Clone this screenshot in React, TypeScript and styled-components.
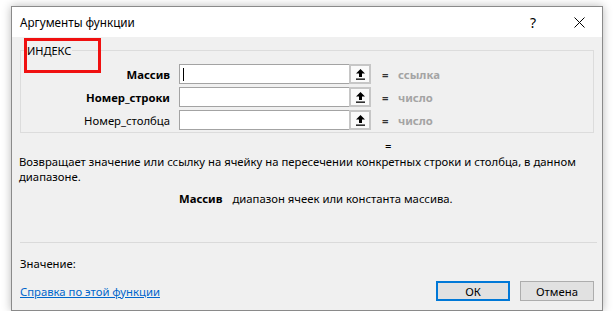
import React from "react";
import styled, { createGlobalStyle } from "styled-components";

const GlobalStyle = createGlobalStyle`
  html, body {
    margin: 0;
    padding: 0;
    background: #ffffff;
  }
  body {
    font-family: "Noto Sans", "Open Sans", sans-serif;
    font-size: 11.3px;
    color: #000;
  }
`;

const Window = styled.div`
  position: relative;
  margin: 6px 0 0 11px;
  width: 592px;
  height: 305px;
  box-sizing: border-box;
  border: 1px solid #8a8a8a;
  background: #f0f0f0;
  box-shadow: 0 0 9px rgba(0, 0, 0, 0.28);
  display: flex;
  flex-direction: column;
`;

const TitleBar = styled.div`
  height: 30px;
  background: #ffffff;
  display: flex;
  align-items: center;
  padding-left: 8px;
`;

const Title = styled.div`
  flex: 1;
  font-size: 11.7px;
`;

const TitleButton = styled.div`
  width: 46px;
  height: 30px;
  display: flex;
  align-items: center;
  justify-content: center;
  font-size: 14px;
`;

const Body = styled.div`
  flex: 1;
  display: flex;
  flex-direction: column;
  padding: 13px 8px 0 7px;
`;

const Group = styled.div`
  position: relative;
  margin-left: 1px;
  padding: 13px 0 2px 0;
  height: 83px;
  box-sizing: border-box;
  border: 1px solid #dcdcdc;
  display: flex;
  flex-direction: column;
  gap: 3px;
`;

const Legend = styled.div`
  position: absolute;
  left: 5px;
  top: -8px;
  padding: 0 1px;
  background: #f0f0f0;
  font-size: 11px;
  line-height: 15px;
`;

const Row = styled.div`
  display: flex;
  align-items: center;
  height: 20px;
`;

const ArgLabel = styled.div<{ $bold?: boolean }>`
  width: 149px;
  text-align: right;
  font-weight: ${({ $bold }) => ($bold ? 700 : 400)};
  padding-right: 9px;
`;

const Field = styled.div`
  width: 170px;
  height: 20px;
  box-sizing: border-box;
  border: 1px solid #a3a3a3;
  border-right: none;
  background: #fff;
  display: flex;
  align-items: center;
  padding-left: 3px;
`;

const Caret = styled.div`
  width: 1px;
  height: 13px;
  background: #000;
`;

const RefButton = styled.div`
  width: 22px;
  height: 20px;
  box-sizing: border-box;
  border: 2px solid #c6c6c6;
  background: #fafafa;
  display: flex;
  align-items: center;
  justify-content: center;
`;

const Equals = styled.div`
  margin-left: 11px;
  width: 16px;
  font-weight: 700;
  color: #333;
`;

const Result = styled.div`
  color: #a4a4a4;
  font-weight: 700;
`;

const TotalEquals = styled.div`
  margin: 6px 0 0 366px;
  height: 14px;
  line-height: 14px;
`;

const Description = styled.div`
  margin: 1px 0 0 0;
  line-height: 15px;
`;

const ArgHelp = styled.div`
  margin: 7px 0 0 0;
  padding-left: 160px;
  line-height: 15px;
  display: flex;
  gap: 10px;
`;

const Strong = styled.span`
  font-weight: 700;
`;

const Separator = styled.div`
  margin: 36px 0 0 1px;
  height: 1px;
  background: #dadada;
  width: 577px;
`;

const ValueLine = styled.div`
  margin: 13px 0 0 1px;
  line-height: 15px;
`;

const Footer = styled.div`
  margin-top: 10px;
  display: flex;
  align-items: center;
  padding-left: 1px;
`;

const HelpLink = styled.a`
  flex: 1;
  color: #0066cc;
  text-decoration: underline;
  cursor: pointer;
`;

const Button = styled.div<{ $primary?: boolean }>`
  width: 74px;
  height: 20px;
  box-sizing: border-box;
  margin-left: 10px;
  background: #e1e1e1;
  border: ${({ $primary }) => ($primary ? "2px solid #0078d7" : "1px solid #adadad")};
  display: flex;
  align-items: center;
  justify-content: center;
`;

const Highlight = styled.div`
  position: absolute;
  left: 12px;
  top: 31px;
  width: 77px;
  height: 35px;
  box-sizing: border-box;
  border: 3px solid #f01010;
  pointer-events: none;
`;

const UpArrow = () => (
  <svg width="11" height="12" viewBox="0 0 11 12">
    <path d="M5.5 1 L10 5.5 H7 V9 H4 V5.5 H1 Z" fill="#000" />
    <rect x="1" y="10.5" width="9" height="1.3" fill="#000" />
  </svg>
);

const CloseIcon = () => (
  <svg width="11" height="11" viewBox="0 0 11 11">
    <path d="M0.5 0.5 L10.5 10.5 M10.5 0.5 L0.5 10.5" stroke="#000" strokeWidth="1" />
  </svg>
);

const args = [
  { name: "Массив", bold: true, value: "ссылка", caret: true },
  { name: "Номер_строки", bold: true, value: "число", caret: false },
  { name: "Номер_столбца", bold: false, value: "число", caret: false },
];

export default function App() {
  return (
    <>
      <GlobalStyle />
      <Window>
        <TitleBar>
          <Title>Аргументы функции</Title>
          <TitleButton>?</TitleButton>
          <TitleButton>
            <CloseIcon />
          </TitleButton>
        </TitleBar>
        <Body>
          <Group>
            <Legend>ИНДЕКС</Legend>
            {args.map((a) => (
              <Row key={a.name}>
                <ArgLabel $bold={a.bold}>{a.name}</ArgLabel>
                <Field>{a.caret && <Caret />}</Field>
                <RefButton>
                  <UpArrow />
                </RefButton>
                <Equals>=</Equals>
                <Result>{a.value}</Result>
              </Row>
            ))}
          </Group>
          <TotalEquals>=</TotalEquals>
          <Description>
            Возвращает значение или ссылку на ячейку на пересечении конкретных строки и столбца, в данном
            <br />
            диапазоне.
          </Description>
          <ArgHelp>
            <Strong>Массив</Strong>
            <span>диапазон ячеек или константа массива.</span>
          </ArgHelp>
          <Separator />
          <ValueLine>Значение:</ValueLine>
          <Footer>
            <HelpLink>Справка по этой функции</HelpLink>
            <Button $primary>ОК</Button>
            <Button>Отмена</Button>
          </Footer>
        </Body>
        <Highlight />
      </Window>
    </>
  );
}
